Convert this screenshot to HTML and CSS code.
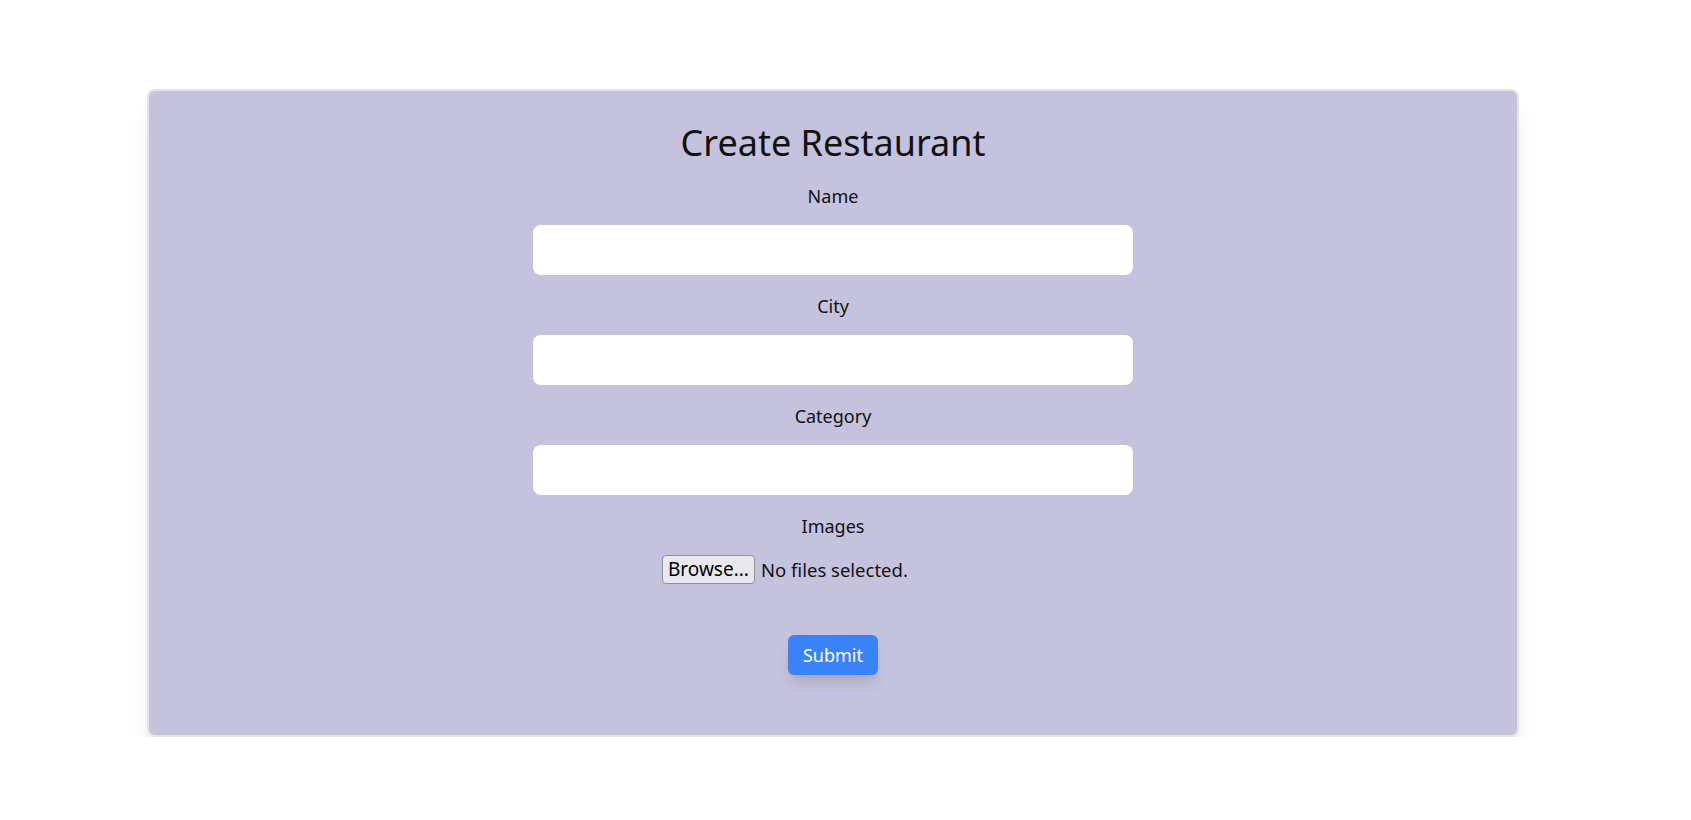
FILE: index.html
```html
<!DOCTYPE html>
<html lang="en">
<head>
  <meta charset="UTF-8">
  <meta name="viewport" content="width=device-width, initial-scale=1.0">
  <title>Create Restaurant</title>
  <link rel="stylesheet" href="styles.css">
</head>
<body>

  <div class="card">
    <h1>Create Restaurant</h1>
    <form class="restaurant-form">
      <label for="name">Name</label>
      <input type="text" id="name" />

      <label for="city">City</label>
      <input type="text" id="city" />

      <label for="category">Category</label>
      <input type="text" id="category" />

      <label>Images</label>
      <div class="file-row">
        <label class="browse-btn">Browse...<input type="file" multiple /></label>
        <span class="file-status">No files selected.</span>
      </div>

      <button type="submit" class="submit-btn">Submit</button>
    </form>
  </div>

</body>
</html>
```

FILE: styles.css
```css
body {
  font-family: 'Noto Sans', 'Open Sans', sans-serif;
  background: #ffffff;
  margin: 0;
  color: #111111;
}

.card {
  background: #c5c2de;
  border: 2px solid #e4e4e8;
  border-radius: 8px;
  box-shadow: 0 20px 25px -5px rgba(0,0,0,0.1), 0 8px 10px -6px rgba(0,0,0,0.1);
  margin: 89px 172px 0 147px;
  padding: 32px 32px 60px;
  text-align: center;
}

h1 {
  font-size: 36px;
  font-weight: 400;
  line-height: 40px;
  margin: 0 0 19px;
}

.restaurant-form {
  display: flex;
  flex-direction: column;
  align-items: center;
}

.restaurant-form > label {
  font-size: 18px;
  line-height: 28px;
  margin-bottom: 15px;
}

input[type="text"] {
  width: 600px;
  height: 50px;
  box-sizing: border-box;
  border: none;
  border-radius: 8px;
  background: white;
  margin: 0 0 17px;
  padding: 0 12px;
  font-size: 16px;
}

.file-row {
  width: 342px;
  display: flex;
  align-items: center;
  gap: 6px;
  font-size: 18.5px;
  margin-bottom: 51px;
}

.browse-btn {
  display: inline-block;
  background: #e9e9ed;
  border: 1px solid #8f8f9d;
  border-radius: 4px;
  padding: 0 5px;
  height: 29px;
  line-height: 27px;
  box-sizing: border-box;
  font-size: 19px;
  color: #000;
}

.browse-btn input {
  display: none;
}

.submit-btn {
  background-color: #3b82f6;
  color: white;
  border: none;
  border-radius: 6px;
  padding: 0 15px;
  height: 40px;
  font-family: inherit;
  font-size: 18px;
  box-shadow: 0 10px 15px -3px rgba(0,0,0,0.12), 0 4px 6px -4px rgba(0,0,0,0.1);
  cursor: pointer;
}
```
